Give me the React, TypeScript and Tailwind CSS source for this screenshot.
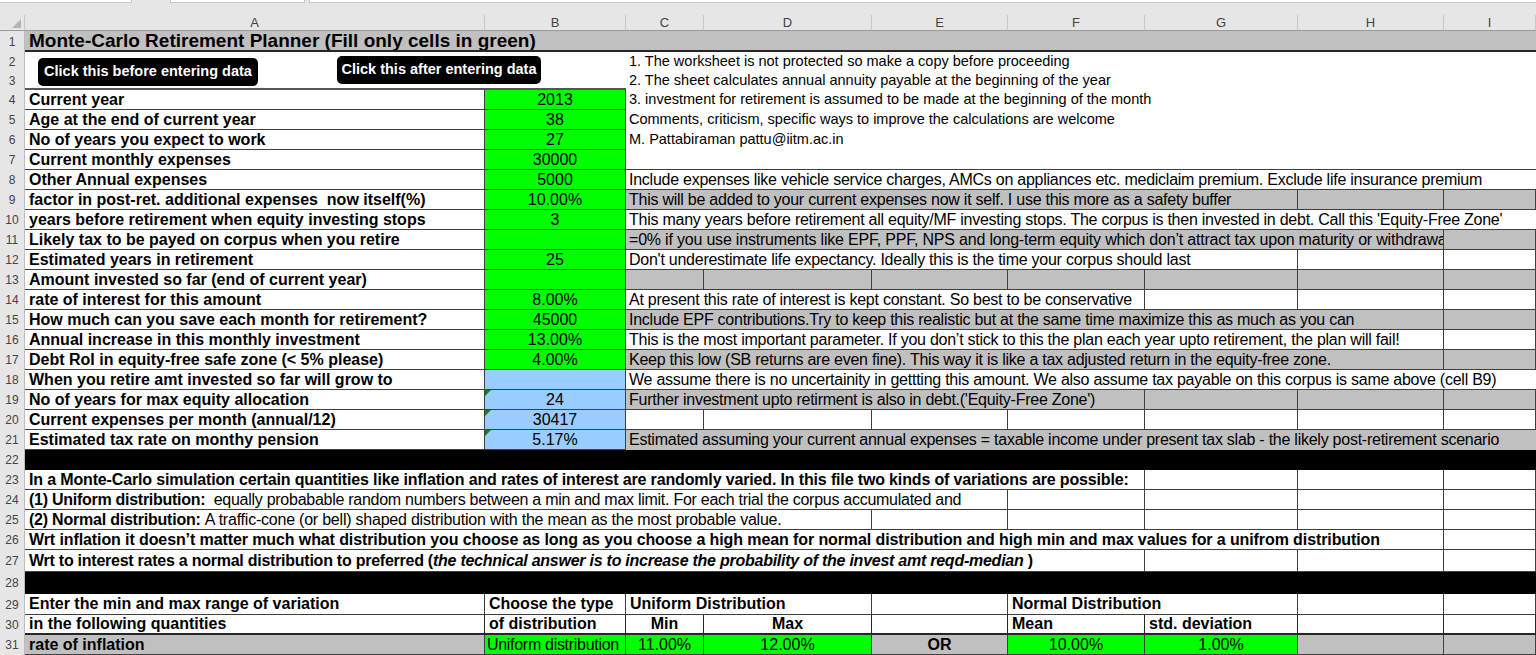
import type { ReactNode } from "react";

const COLS =
  "grid grid-cols-[25px_460px_141px_78px_168px_136px_137px_153px_146px_92px]";

const SPAN: Record<number, string> = {
  1: "col-span-1",
  2: "col-span-2",
  3: "col-span-3",
  4: "col-span-4",
  5: "col-span-5",
  6: "col-span-6",
  7: "col-span-7",
  8: "col-span-8",
  9: "col-span-9",
};

// cell borders
const BOX = "border-r border-b border-[#404040]";
const BOT = "border-b border-[#404040]";

const GREEN = "bg-[#00ff00]";
const BLUE = "bg-[#99ccff]";
const GREY = "bg-[#c0c0c0]";

const LBL = "font-bold text-[16px] pl-[4px]";
const VAL = "justify-center text-[16px]";
const NOTE = "text-[16px] tracking-[-0.25px] pl-[3px]";
const TOP = "text-[14.5px] pl-[3px]";

function Cell({
  span = 1,
  cls = "",
  children,
}: {
  span?: number;
  cls?: string;
  children?: ReactNode;
}) {
  return (
    <div
      className={`${SPAN[span]} ${cls} relative flex items-center overflow-hidden whitespace-nowrap text-black`}
    >
      {children}
    </div>
  );
}

function RowNum({ n }: { n: number }) {
  return (
    <div className="flex items-center justify-center bg-[#e6e6e6] border-r border-[#bdbdbd] text-[12px] text-[#444]">
      {n}
    </div>
  );
}

function Tri() {
  return (
    <svg className="absolute left-0 top-0" width="6" height="6" viewBox="0 0 6 6">
      <polygon points="0,0 6,0 0,6" fill="#1f7a1f" />
    </svg>
  );
}

type Part = { span?: number; cls?: string; text?: ReactNode };

// rows 4..21: label, value, then the C..I parts
const rows: {
  n: number;
  label: string;
  value?: string;
  vbg: string;
  tri?: boolean;
  rest: Part[];
}[] = [
  {
    n: 4,
    label: "Current year",
    value: "2013",
    vbg: GREEN,
    rest: [{ span: 7, cls: TOP, text: "3. investment for retirement is assumed to be made at the beginning of the month" }],
  },
  {
    n: 5,
    label: "Age at the end of current year",
    value: "38",
    vbg: GREEN,
    rest: [{ span: 7, cls: TOP, text: "Comments, criticism, specific ways to improve the calculations are welcome" }],
  },
  {
    n: 6,
    label: "No of years you expect to work",
    value: "27",
    vbg: GREEN,
    rest: [{ span: 7, cls: TOP, text: "M. Pattabiraman pattu@iitm.ac.in" }],
  },
  {
    n: 7,
    label: "Current monthly expenses",
    value: "30000",
    vbg: GREEN,
    rest: [{ span: 7, cls: BOT }],
  },
  {
    n: 8,
    label: "Other Annual expenses",
    value: "5000",
    vbg: GREEN,
    rest: [
      {
        span: 7,
        cls: `${BOT} ${NOTE}`,
        text: "Include expenses like vehicle service charges, AMCs on appliances etc. mediclaim premium. Exclude life insurance premium",
      },
    ],
  },
  {
    n: 9,
    label: "factor in post-ret. additional expenses\u00a0 now itself(%)",
    value: "10.00%",
    vbg: GREEN,
    rest: [
      {
        span: 5,
        cls: `${BOX} ${GREY} ${NOTE}`,
        text: "This will be added to your current expenses now it self. I use this more as a safety buffer",
      },
      { cls: `${BOX} ${GREY}` },
      { cls: `${BOX} ${GREY}` },
    ],
  },
  {
    n: 10,
    label: "years before retirement when equity investing stops",
    value: "3",
    vbg: GREEN,
    rest: [
      {
        span: 7,
        cls: `${BOT} ${NOTE}`,
        text: "This many years before retirement all equity/MF investing stops. The corpus is then invested in debt. Call this 'Equity-Free Zone'",
      },
    ],
  },
  {
    n: 11,
    label: "Likely tax to be payed on corpus when you retire",
    vbg: GREEN,
    rest: [
      {
        span: 6,
        cls: `${BOX} ${GREY} text-[16px] tracking-[-0.2px] pl-[3px]`,
        text: "=0% if you use instruments like EPF, PPF, NPS and long-term equity which don\u2019t attract tax upon maturity or withdrawal",
      },
      { cls: `${BOX} ${GREY}` },
    ],
  },
  {
    n: 12,
    label: "Estimated years in retirement",
    value: "25",
    vbg: GREEN,
    rest: [
      {
        span: 5,
        cls: `${BOX} ${NOTE}`,
        text: "Don't underestimate life expectancy. Ideally this is the time your corpus should last",
      },
      { cls: BOX },
      { cls: BOX },
    ],
  },
  {
    n: 13,
    label: "Amount invested so far (end of current year)",
    vbg: GREEN,
    rest: [
      { cls: `${BOX} ${GREY}` },
      { cls: `${BOX} ${GREY}` },
      { cls: `${BOX} ${GREY}` },
      { cls: `${BOX} ${GREY}` },
      { cls: `${BOX} ${GREY}` },
      { cls: `${BOX} ${GREY}` },
      { cls: `${BOX} ${GREY}` },
    ],
  },
  {
    n: 14,
    label: "rate of interest for this amount",
    value: "8.00%",
    vbg: GREEN,
    rest: [
      {
        span: 4,
        cls: `${BOX} ${NOTE}`,
        text: "At present this rate of interest is kept constant. So best to be conservative",
      },
      { cls: BOX },
      { cls: BOX },
      { cls: BOX },
    ],
  },
  {
    n: 15,
    label: "How much can you save each month for retirement?",
    value: "45000",
    vbg: GREEN,
    rest: [
      {
        span: 6,
        cls: `${BOX} ${GREY} ${NOTE}`,
        text: "Include EPF contributions.Try to keep this realistic but at the same time maximize this as much as you can",
      },
      { cls: `${BOX} ${GREY}` },
    ],
  },
  {
    n: 16,
    label: "Annual increase in this monthly investment",
    value: "13.00%",
    vbg: GREEN,
    rest: [
      {
        span: 6,
        cls: `${BOX} ${NOTE}`,
        text: "This is the most important parameter. If you don\u2019t stick to this the plan each year upto retirement, the plan will fail!",
      },
      { cls: BOX },
    ],
  },
  {
    n: 17,
    label: "Debt RoI in equity-free safe zone (< 5% please)",
    value: "4.00%",
    vbg: GREEN,
    rest: [
      {
        span: 6,
        cls: `${BOX} ${GREY} ${NOTE}`,
        text: "Keep this low (SB returns are even fine). This way it is like a tax adjusted return in the equity-free zone.",
      },
      { cls: `${BOX} ${GREY}` },
    ],
  },
  {
    n: 18,
    label: "When you retire amt invested so far will grow to",
    vbg: BLUE,
    rest: [
      {
        span: 7,
        cls: `${BOT} ${NOTE}`,
        text: "We assume there is no uncertainity in gettting this amount. We also assume tax payable on this corpus is same above (cell B9)",
      },
    ],
  },
  {
    n: 19,
    label: "No of years for max equity allocation",
    value: "24",
    vbg: BLUE,
    tri: true,
    rest: [
      {
        span: 4,
        cls: `${BOX} ${GREY} ${NOTE}`,
        text: "Further investment upto retirment is also in debt.('Equity-Free Zone')",
      },
      { cls: `${BOX} ${GREY}` },
      { cls: `${BOX} ${GREY}` },
      { cls: `${BOX} ${GREY}` },
    ],
  },
  {
    n: 20,
    label: "Current expenses per month (annual/12)",
    value: "30417",
    vbg: BLUE,
    tri: true,
    rest: [
      { cls: BOX },
      { cls: BOX },
      { cls: BOX },
      { cls: BOX },
      { cls: BOX },
      { cls: BOX },
      { cls: BOX },
    ],
  },
  {
    n: 21,
    label: "Estimated tax rate on monthy pension",
    value: "5.17%",
    vbg: BLUE,
    tri: true,
    rest: [
      {
        span: 7,
        cls: `${GREY} ${NOTE}`,
        text: "Estimated assuming your current annual expenses = taxable income under present tax slab - the likely post-retirement scenario",
      },
    ],
  },
];

function BlackRow({ n, h }: { n: number; h: string }) {
  return (
    <div className={`${COLS} ${h}`}>
      <RowNum n={n} />
      <Cell span={9} cls="bg-black" />
    </div>
  );
}

export default function App() {
  const letters = ["A", "B", "C", "D", "E", "F", "G", "H", "I"];
  return (
    <div className="w-[1536px] h-[655px] overflow-hidden bg-white font-['Liberation_Sans',Arial,sans-serif]">
      {/* strip above the grid */}
      <div className="h-[15px] bg-[#e6e6e6] flex items-start">
        <div className="w-[132px] h-[3px] bg-white border-b border-r border-[#c6c6c6]" />
        <div className="ml-[38px] w-[135px] h-[3px] bg-white border-b border-x border-[#c6c6c6]" />
        <div className="ml-[4px] flex-1 h-[3px] bg-white border-b border-l border-[#c6c6c6]" />
      </div>

      {/* column letters */}
      <div className={`${COLS} h-[16px] bg-[#e6e6e6] border-b border-[#9b9b9b]`}>
        <div className="relative border-r border-[#c8c8c8]">
          <svg className="absolute right-[3px] bottom-[2px]" width="9" height="9" viewBox="0 0 9 9">
            <polygon points="9,0 9,9 0,9" fill="#b4b4b4" />
          </svg>
        </div>
        {letters.map((l) => (
          <div
            key={l}
            className="flex items-end justify-center pb-[1px] text-[13px] leading-none text-[#444] border-r border-[#c8c8c8]"
          >
            {l}
          </div>
        ))}
      </div>

      {/* row 1 */}
      <div className={`${COLS} h-[21px]`}>
        <RowNum n={1} />
        <Cell span={9} cls={`${GREY} border-b-2 border-[#262626] font-bold text-[19px] leading-none pl-[4px]`}>
          Monte-Carlo Retirement Planner (Fill only cells in green)
        </Cell>
      </div>

      {/* rows 2-3 with the two buttons */}
      <div className="relative">
        <div className={`${COLS} h-[19px]`}>
          <RowNum n={2} />
          <Cell span={2} />
          <Cell span={7} cls={TOP}>
            1. The worksheet is not protected so make a copy before proceeding
          </Cell>
        </div>
        <div className={`${COLS} h-[19px]`}>
          <RowNum n={3} />
          <Cell span={2} cls="border-b-2 border-[#555]" />
          <Cell span={7} cls={TOP}>
            2. The sheet calculates annual annuity payable at the beginning of the year
          </Cell>
        </div>
        <div className="absolute left-[38px] top-[6px] w-[220px] h-[28px] rounded-[5px] bg-black text-white font-bold text-[14.5px] flex items-center justify-center">
          Click this before entering data
        </div>
        <div className="absolute left-[337px] top-[4px] w-[204px] h-[28px] rounded-[5px] bg-black text-white font-bold text-[14.5px] flex items-center justify-center">
          Click this after entering data
        </div>
      </div>

      {/* rows 4-21 */}
      {rows.map((r) => (
        <div key={r.n} className={`${COLS} h-[20px]`}>
          <RowNum n={r.n} />
          <Cell cls={`${BOX} ${LBL}`}>{r.label}</Cell>
          <Cell cls={`${BOX} ${r.vbg} ${VAL}`}>
            {r.tri && <Tri />}
            {r.value}
          </Cell>
          {r.rest.map((p, i) => (
            <Cell key={i} span={p.span} cls={p.cls}>
              {p.text}
            </Cell>
          ))}
        </div>
      ))}

      <BlackRow n={22} h="h-[20px]" />

      {/* explanation rows */}
      <div className={`${COLS} h-[20px]`}>
        <RowNum n={23} />
        <Cell span={6} cls={`${BOX} ${LBL} tracking-[-0.15px]`}>
          In a Monte-Carlo simulation certain quantities like inflation and rates of interest are randomly varied. In this file two kinds of variations are possible:
        </Cell>
        <Cell cls={BOX} />
        <Cell cls={BOX} />
        <Cell cls={BOX} />
      </div>
      <div className={`${COLS} h-[20px]`}>
        <RowNum n={24} />
        <Cell span={5} cls={`${BOX} text-[16px] pl-[4px] tracking-[-0.27px]`}>
          <b>(1) Uniform distribution:</b>
          <span>&nbsp; equally probabable random numbers between a min and max limit. For each trial the corpus accumulated and</span>
        </Cell>
        <Cell cls={BOX} />
        <Cell cls={BOX} />
        <Cell cls={BOX} />
        <Cell cls={BOX} />
      </div>
      <div className={`${COLS} h-[20px]`}>
        <RowNum n={25} />
        <Cell span={4} cls={`${BOX} text-[16px] pl-[4px] tracking-[-0.22px]`}>
          <b>(2) Normal distribution:</b>
          <span>&nbsp;A traffic-cone (or bell) shaped distribution with the mean as the most probable value.</span>
        </Cell>
        <Cell cls={BOX} />
        <Cell cls={BOX} />
        <Cell cls={BOX} />
        <Cell cls={BOX} />
        <Cell cls={BOX} />
      </div>
      <div className={`${COLS} h-[20px]`}>
        <RowNum n={26} />
        <Cell span={8} cls={`${BOX} ${LBL} tracking-[-0.1px]`}>
          Wrt inflation it doesn’t matter much what distribution you choose as long as you choose a high mean for normal distribution and high min and max values for a unifrom distribution
        </Cell>
        <Cell cls={BOX} />
      </div>
      <div className={`${COLS} h-[22px]`}>
        <RowNum n={27} />
        <Cell span={6} cls={`${BOX} ${LBL} tracking-[-0.25px]`}>
          Wrt to interest rates a normal distribution to preferred (
          <i>the technical answer is to increase the probability of the invest amt reqd-median</i>
          &nbsp;)
        </Cell>
        <Cell cls={BOX} />
        <Cell cls={BOX} />
        <Cell cls={BOX} />
      </div>

      <BlackRow n={28} h="h-[22px]" />

      {/* distribution table */}
      <div className={`${COLS} h-[21px]`}>
        <RowNum n={29} />
        <Cell cls={`${BOX} ${LBL}`}>Enter the min and max range of variation</Cell>
        <Cell cls={`${BOX} ${LBL}`}>Choose the type</Cell>
        <Cell span={2} cls={`${BOX} ${LBL}`}>Uniform Distribution</Cell>
        <Cell cls={BOX} />
        <Cell span={2} cls={`${BOX} ${LBL}`}>Normal Distribution</Cell>
        <Cell cls={BOX} />
        <Cell cls={BOX} />
      </div>
      <div className={`${COLS} h-[20px]`}>
        <RowNum n={30} />
        <Cell cls={`border-r border-b-2 border-[#262626] ${LBL}`}>in the following quantities</Cell>
        <Cell cls={`border-r border-b-2 border-[#262626] ${LBL}`}>of distribution</Cell>
        <Cell cls="border-r border-b-2 border-[#262626] font-bold text-[16px] justify-center">Min</Cell>
        <Cell cls="border-r border-b-2 border-[#262626] font-bold text-[16px] justify-center">Max</Cell>
        <Cell cls="border-r border-b-2 border-[#262626]" />
        <Cell cls={`border-r border-b-2 border-[#262626] ${LBL}`}>Mean</Cell>
        <Cell cls={`border-r border-b-2 border-[#262626] ${LBL}`}>std. deviation</Cell>
        <Cell cls="border-r border-b-2 border-[#262626]" />
        <Cell cls="border-r border-b-2 border-[#262626]" />
      </div>
      <div className={`${COLS} h-[20px]`}>
        <RowNum n={31} />
        <Cell cls={`${BOX} ${GREY} ${LBL}`}>rate of inflation</Cell>
        <Cell cls={`${BOX} ${GREEN} text-[16px] pl-[2px] tracking-[-0.3px]`}>Uniform distribution</Cell>
        <Cell cls={`${BOX} ${GREEN} ${VAL}`}>11.00%</Cell>
        <Cell cls={`${BOX} ${GREEN} ${VAL}`}>12.00%</Cell>
        <Cell cls={`${BOX} ${GREY} font-bold text-[16px] justify-center`}>OR</Cell>
        <Cell cls={`${BOX} ${GREEN} ${VAL}`}>10.00%</Cell>
        <Cell cls={`${BOX} ${GREEN} ${VAL}`}>1.00%</Cell>
        <Cell cls={`${BOX} ${GREY}`} />
        <Cell cls={`${BOX} ${GREY}`} />
      </div>
    </div>
  );
}
